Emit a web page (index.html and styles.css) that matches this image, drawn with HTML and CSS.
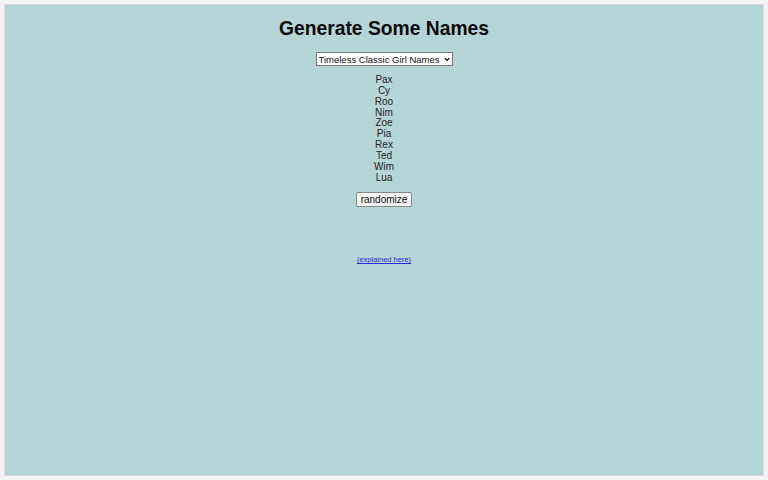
FILE: index.html
```html
<!DOCTYPE html>
<html lang="en">
<head>
    <meta charset="UTF-8">
    <title>Generate Some Names</title>
    <link rel="stylesheet" href="styles.css">
</head>
<body>
    <main class="panel">
        <h1>Generate Some Names</h1>
        <select class="list-picker">
            <option>Timeless Classic Girl Names</option>
            <option>Short Boy Names</option>
        </select>
        <ul class="names">
            <li>Pax</li>
            <li>Cy</li>
            <li>Roo</li>
            <li>Nim</li>
            <li>Zoe</li>
            <li>Pia</li>
            <li>Rex</li>
            <li>Ted</li>
            <li>Wim</li>
            <li>Lua</li>
        </ul>
        <button class="shuffle">randomize</button>
        <p class="note"><a href="#">(explained here)</a></p>
    </main>
</body>
</html>
```

FILE: styles.css
```css
html, body {
    height: 100%;
}

body {
    margin: 0;
    padding: 4px;
    box-sizing: border-box;
    background: #f3f3f3;
    font-family: "Liberation Sans", Arial, sans-serif;
    color: #111;
}

.panel {
    height: 100%;
    box-sizing: border-box;
    background: #b4d6d7;
    border: 1px solid #d8dcdc;
    display: flex;
    flex-direction: column;
    align-items: center;
    padding-top: 12px;
}

h1 {
    margin: 0;
    font-size: 19.3px;
    line-height: 23px;
    font-weight: bold;
    color: #0a0a0a;
}

/* small chevron instead of the wide native arrow */
.list-picker {
    appearance: none;
    -webkit-appearance: none;
    margin-top: 12px;
    font-family: inherit;
    font-size: 9.5px;
    height: 14px;
    width: 137px;
    padding: 0 9px 0 2px;
    border: 1px solid #777;
    border-radius: 0;
    background: #fff url("data:image/svg+xml,%3Csvg xmlns='http://www.w3.org/2000/svg' width='6' height='5' viewBox='0 0 6 5'%3E%3Cpath d='M.8 1.2L3 3.4l2.2-2.2' fill='none' stroke='%23111' stroke-width='1.3'/%3E%3C/svg%3E") no-repeat right 2px center;
    color: #111;
}

.names {
    list-style: none;
    margin: 9px 0 0;
    padding: 0;
    text-align: center;
    font-size: 10px;
    line-height: 10.85px;
    color: #222;
}

.shuffle {
    margin-top: 9px;
    font-family: inherit;
    font-size: 10px;
    height: 15px;
    padding: 0 4px;
    background: #f4f4f4;
    border: 1px solid #888;
    border-radius: 2px;
    color: #111;
}

.note {
    margin: 48px 0 0;
    font-size: 7.5px;
}

.note a {
    color: #2b2bd8;
}
```
